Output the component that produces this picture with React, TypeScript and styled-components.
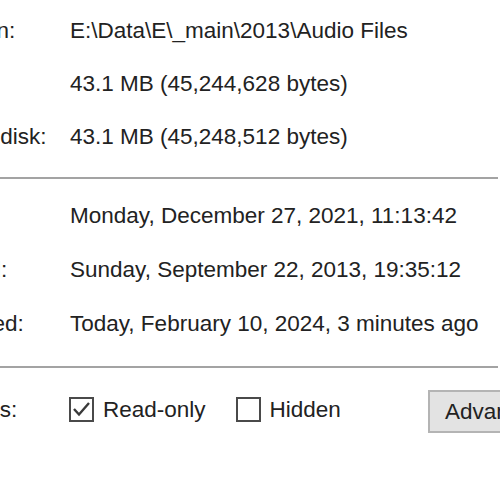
import React from "react";
import styled, { createGlobalStyle } from "styled-components";

const Global = createGlobalStyle`
  html, body { margin: 0; padding: 0; background: #ffffff; overflow: hidden; }
  body { width: 500px; height: 500px; }
`;

const Page = styled.div`
  width: 500px;
  height: 500px;
  overflow: hidden;
  font-family: "Liberation Sans", Arial, sans-serif;
  font-size: 22.5px;
  color: #222222;
  padding-top: 4px;
  box-sizing: border-box;
`;

const Section = styled.div<{ $rowH: number }>`
  display: grid;
  grid-template-columns: 142px 1fr;
  grid-auto-rows: ${(p) => p.$rowH}px;
  margin-left: -72px;
  align-items: center;
`;

const Label = styled.div<{ $nudge?: number }>`
  white-space: nowrap;
  margin-left: ${(p) => p.$nudge ?? 0}px;
`;

const Value = styled.div`
  white-space: nowrap;
`;

const Separator = styled.div<{ $top: number; $bottom: number }>`
  height: 2px;
  background: #a3a3a3;
  margin: ${(p) => p.$top}px 2px ${(p) => p.$bottom}px 0;
`;

const AttrRow = styled.div`
  display: flex;
  align-items: flex-start;
  height: 43px;
  margin-left: -72px;
`;

const AttrLabel = styled.div<{ $nudge?: number }>`
  width: 141px;
  white-space: nowrap;
  line-height: 43px;
  margin-top: -2px;
  text-indent: ${(p) => p.$nudge ?? 0}px;
`;

const Check = styled.label`
  display: flex;
  align-items: center;
  gap: 9px;
  margin-top: 5px;
  margin-right: 30px;
  white-space: nowrap;
  line-height: 29px;
`;

const Box = styled.span`
  width: 25px;
  height: 25px;
  box-sizing: border-box;
  border: 2px solid #4a4a4a;
  display: inline-flex;
  align-items: center;
  justify-content: center;
  background: #fff;
`;

const Button = styled.div`
  margin-left: auto;
  margin-right: -78px;
  width: 150px;
  height: 43px;
  box-sizing: border-box;
  border: 2px solid #b4b4b4;
  background: #e3e3e3;
  display: flex;
  align-items: center;
  padding-left: 15px;
  white-space: nowrap;
`;

const CheckBox = ({ checked, label }: { checked: boolean; label: string }) => (
  <Check>
    <Box>
      {checked && (
        <svg width="19" height="19" viewBox="0 0 19 19">
          <path d="M2 9 L7 14.5 L17 3" fill="none" stroke="#3a3a3a" strokeWidth="2.4" />
        </svg>
      )}
    </Box>
    {label}
  </Check>
);

export default function App() {
  return (
    <>
      <Global />
      <Page>
        <Section $rowH={53}>
          <Label $nudge={-4}>Location:</Label>
          <Value>E:\Data\E\_main\2013\Audio Files</Value>
          <Label>Size:</Label>
          <Value>43.1 MB (45,244,628 bytes)</Value>
          <Label $nudge={-9}>Size on disk:</Label>
          <Value>43.1 MB (45,248,512 bytes)</Value>
        </Section>
        <Separator $top={14} $bottom={10} />
        <Section $rowH={54}>
          <Label $nudge={-14}>Created:</Label>
          <Value>Monday, December 27, 2021, 11:13:42</Value>
          <Label $nudge={-12}>Modified:</Label>
          <Value>Sunday, September 22, 2013, 19:35:12</Value>
          <Label $nudge={-8}>Accessed:</Label>
          <Value>Today, February 10, 2024, 3 minutes ago</Value>
        </Section>
        <Separator $top={15} $bottom={22} />
        <AttrRow>
          <AttrLabel $nudge={-12}>Attributes:</AttrLabel>
          <CheckBox checked label="Read-only" />
          <CheckBox checked={false} label="Hidden" />
          <Button>Advanced...</Button>
        </AttrRow>
      </Page>
    </>
  );
}
